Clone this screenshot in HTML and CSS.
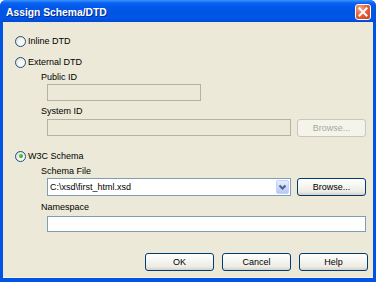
FILE: index.html
```html
<!DOCTYPE html>
<html>
<head>
<meta charset="utf-8">
<link rel="stylesheet" href="styles.css">
</head>
<body>
<div class="window">
  <div class="titlebar">
    <span class="title">Assign Schema/DTD</span>
    <span class="close">
      <svg width="16" height="16" viewBox="0 0 16 16"><path d="M4.5 4.5 L11.5 11.5 M11.5 4.5 L4.5 11.5" stroke="#fff" stroke-width="2" stroke-linecap="square"/></svg>
    </span>
  </div>
  <div class="client">
    <div class="radio-row r-inline"><span class="radio"></span><span>Inline DTD</span></div>
    <div class="radio-row r-external"><span class="radio"></span><span>External DTD</span></div>
    <div class="group">
      <div class="label l-public">Public ID</div>
      <div class="edit disabled w-short"></div>
      <div class="label l-system">System ID</div>
      <div class="field-row">
        <div class="edit disabled w-wide"></div>
        <div class="btn btn-disabled">Browse...</div>
      </div>
    </div>
    <div class="radio-row r-w3c"><span class="radio checked"></span><span>W3C Schema</span></div>
    <div class="group">
      <div class="label l-schema">Schema File</div>
      <div class="field-row">
        <div class="combo">
          <span class="combo-value">C:\xsd\first_html.xsd</span>
          <span class="drop">
            <svg width="9" height="7" viewBox="0 0 9 7"><path d="M1.5 1.5 L4.5 4.5 L7.5 1.5" fill="none" stroke="#4d6185" stroke-width="2"/></svg>
          </span>
        </div>
        <div class="btn">Browse...</div>
      </div>
      <div class="label l-ns">Namespace</div>
      <div class="edit w-full"></div>
    </div>
    <div class="footer">
      <div class="btn">OK</div>
      <div class="btn">Cancel</div>
      <div class="btn">Help</div>
    </div>
  </div>
</div>
</body>
</html>
```

FILE: styles.css
```css
html, body {
  margin: 0;
  padding: 0;
  background: #ffffff;
}
.window {
  width: 376px;
  height: 282px;
  display: flex;
  flex-direction: column;
  font-family: "Liberation Sans", Arial, sans-serif;
  font-size: 9px;
  color: #000;
  background: #0054e3;
  border-radius: 6px 6px 0 0;
  overflow: hidden;
}
.titlebar {
  height: 22px;
  flex: none;
  display: flex;
  align-items: center;
  justify-content: space-between;
  padding: 0 5px 0 6px;
  background: linear-gradient(#3d95ff 0px, #0a62f2 3px, #0058ea 7px, #0054e3 13px, #0056e8 18px, #004ad6 22px);
}
.title {
  color: #fff;
  font-weight: bold;
  font-size: 10.3px;
  padding-top: 2px;
  text-shadow: 1px 1px 0 #0a2a8a;
}
.close {
  width: 16px;
  height: 16px;
  box-sizing: border-box;
  border: 1px solid #fff;
  border-radius: 3px;
  background: radial-gradient(circle at 30% 25%, #f5a48a 0%, #e6643c 45%, #c8401a 100%);
  display: flex;
  align-items: center;
  justify-content: center;
  margin-top: 4px;
  margin-bottom: 2px;
}
.close svg { display: block; margin: -1px; }
.client {
  flex: 1;
  margin: 0 3px 4px 3px;
  background: #ece9d8;
  display: flex;
  flex-direction: column;
  border-bottom: 1px solid #f4f2ea;
}
.radio-row {
  display: flex;
  align-items: center;
  height: 12px;
  padding-left: 13px;
  gap: 2px;
}
.r-inline { margin-top: 13px; }
.r-external { margin-top: 9px; }
.r-w3c { margin-top: 13px; }
.radio {
  width: 11px;
  height: 11px;
  box-sizing: border-box;
  border: 1px solid #1c5180;
  border-radius: 50%;
  background: radial-gradient(circle at 65% 65%, #ffffff 0%, #f6f6f2 40%, #d6d4c6 100%);
  position: relative;
  margin-left: -1px;
}
.radio.checked::after {
  content: "";
  position: absolute;
  left: 2.5px;
  top: 2.5px;
  width: 4px;
  height: 4px;
  border-radius: 50%;
  background: radial-gradient(circle at 40% 40%, #5fd35f 0%, #21a121 70%);
}
.group {
  padding-left: 38px;
  display: flex;
  flex-direction: column;
}
.label {
  height: 12px;
  line-height: 12px;
}
.l-public { margin-top: 3px; }
.l-system { margin-top: 4px; }
.l-schema { margin-top: 3px; }
.l-ns { margin-top: 5px; }
.edit {
  margin-left: 6px;
  box-sizing: border-box;
  height: 17px;
  border: 1px solid #7f9db9;
  background: #fff;
}
.edit.disabled {
  border-color: #b5b2a3;
  background: #ece9d8;
}
.w-short { width: 154px; margin-top: 1px; }
.w-wide { width: 244px; }
.w-full { width: 319px; margin-top: 3px; height: 16px; }
.field-row {
  display: flex;
  align-items: flex-start;
  gap: 6px;
  margin-top: 2px;
}
.l-schema + .field-row { margin-top: 1px; }
.combo {
  margin-left: 6px;
  width: 244px;
  height: 18px;
  box-sizing: border-box;
  border: 1px solid #7f9db9;
  background: #fff;
  display: flex;
  align-items: center;
  padding: 1px;
}
.combo-value {
  flex: 1;
  padding-left: 1px;
}
.drop {
  width: 13px;
  height: 14px;
  box-sizing: border-box;
  border: 1px solid #c3d3fd;
  border-radius: 2px;
  background: linear-gradient(#e6eefc, #c7d7f8 60%, #b6c9f4);
  display: flex;
  align-items: center;
  justify-content: center;
}
.drop svg { display: block; }
.btn {
  width: 69px;
  height: 18px;
  box-sizing: border-box;
  border: 1px solid #003c74;
  border-radius: 3px;
  background: linear-gradient(#ffffff 0%, #f6f6f2 40%, #ecebe4 80%, #d6d0c5 100%);
  display: flex;
  align-items: center;
  justify-content: center;
  color: #000;
}
.btn-disabled {
  border-color: #c9c7ba;
  background: #f5f4ea;
  color: #aca899;
}
.footer {
  margin-top: auto;
  margin-bottom: 6px;
  display: flex;
  justify-content: flex-end;
  gap: 8px;
  padding-right: 5px;
}
```
